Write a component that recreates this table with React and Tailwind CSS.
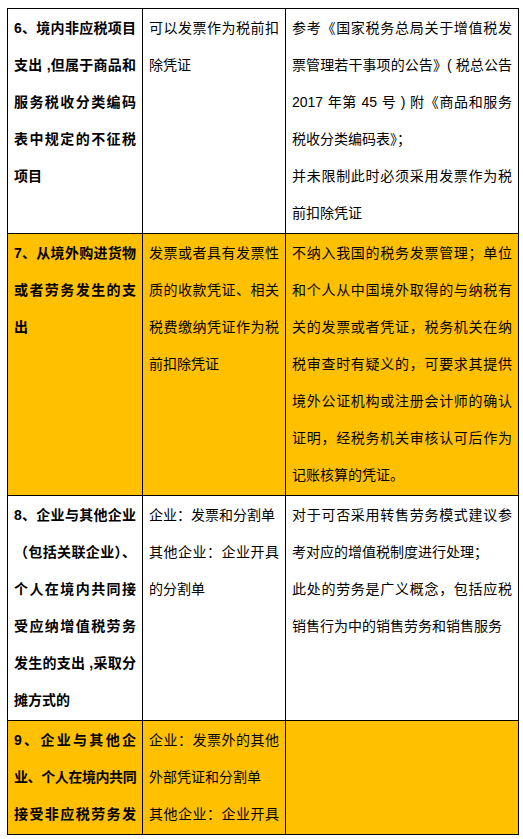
import React from 'react';

const rows = [
  {
    bg: 'bg-white',
    cols: [
      [['6、境内非应税项目', '支出 ,但属于商品和', '服务税收分类编码', '表中规定的不征税', '项目']],
      [['可以发票作为税前扣', '除凭证']],
      [
        ['参考《国家税务总局关于增值税发', '票管理若干事项的公告》( 税总公告', '2017 年第 45 号 ) 附《商品和服务', '税收分类编码表》；'],
        ['并未限制此时必须采用发票作为税', '前扣除凭证'],
      ],
    ],
  },
  {
    bg: 'bg-[#ffc000]',
    cols: [
      [['7、从境外购进货物', '或者劳务发生的支', '出']],
      [['发票或者具有发票性', '质的收款凭证、相关', '税费缴纳凭证作为税', '前扣除凭证']],
      [[
        '不纳入我国的税务发票管理；单位',
        '和个人从中国境外取得的与纳税有',
        '关的发票或者凭证，税务机关在纳',
        '税审查时有疑义的，可要求其提供',
        '境外公证机构或注册会计师的确认',
        '证明，经税务机关审核认可后作为',
        '记账核算的凭证。',
      ]],
    ],
  },
  {
    bg: 'bg-white',
    cols: [
      [['8、企业与其他企业', '（包括关联企业）、', '个人在境内共同接', '受应纳增值税劳务', '发生的支出 ,采取分', '摊方式的']],
      [['企业：发票和分割单'], ['其他企业：企业开具', '的分割单']],
      [
        ['对于可否采用转售劳务模式建议参', '考对应的增值税制度进行处理；'],
        ['此处的劳务是广义概念，包括应税', '销售行为中的销售劳务和销售服务'],
      ],
    ],
  },
  {
    bg: 'bg-[#ffc000]',
    cols: [
      [['9、企业与其他企', '业、个人在境内共同', '接受非应税劳务发.']],
      [['企业：发票外的其他', '外部凭证和分割单'], ['其他企业：企业开具.']],
      [],
    ],
  },
];

function Para({ lines }) {
  return (
    <div>
      {lines.map((line, i) => {
        const open = line.endsWith('.');
        const text = open ? line.slice(0, -1) : line;
        const full = open || i < lines.length - 1;
        const tight = text === '业、个人在境内共同';
        return (
          <div
            key={i}
            className={
              'whitespace-nowrap ' +
              (full ? 'text-justify [text-align-last:justify] ' : '') +
              (tight ? 'tracking-[-0.7px]' : '')
            }
          >
            {text}
          </div>
        );
      })}
    </div>
  );
}

export default function App() {
  return (
    <div className="bg-white w-[523px] h-[839px] pl-[7px] pt-[8px] text-black text-[14px] leading-[37px] [font-family:'Liberation_Sans','Noto_Sans_CJK_SC',sans-serif]">
      <table className="table-fixed border-collapse w-[511px]">
        <colgroup>
          <col className="w-[135px]" />
          <col className="w-[143px]" />
          <col className="w-[233px]" />
        </colgroup>
        <tbody>
          {rows.map((row, r) => (
            <tr key={r} className={row.bg}>
              {row.cols.map((paras, c) => (
                <td
                  key={c}
                  className={
                    'border border-black align-top pt-px pb-px px-[6px] ' +
                    (c === 0 ? 'font-bold' : '')
                  }
                >
                  {paras.map((p, i) => (
                    <Para key={i} lines={p} />
                  ))}
                </td>
              ))}
            </tr>
          ))}
        </tbody>
      </table>
    </div>
  );
}
